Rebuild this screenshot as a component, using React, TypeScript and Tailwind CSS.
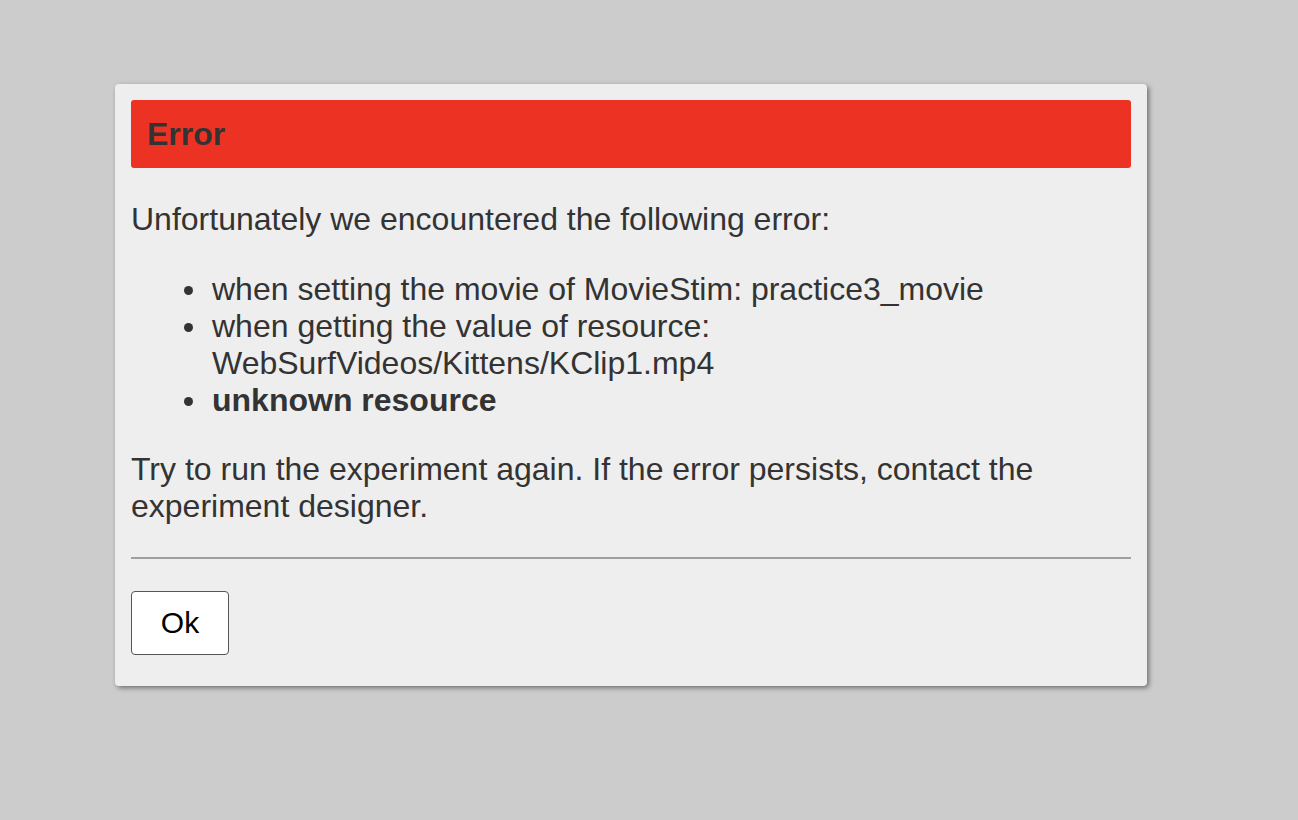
import React from "react";

const items: { text: string; bold?: boolean }[] = [
  { text: "when setting the movie of MovieStim: practice3_movie" },
  { text: "when getting the value of resource: WebSurfVideos/Kittens/KClip1.mp4" },
  { text: "unknown resource", bold: true },
];

export default function App() {
  return (
    <div className="min-h-[820px] bg-[#cccccc] pt-[84px] pl-[115px] font-['Liberation_Sans',Arial,sans-serif]">
      <div className="w-[1032px] bg-[#eeeeee] rounded-[4px] px-4 pt-4 pb-[31px] shadow-[2px_2px_5px_rgba(0,0,0,0.45)]">
        <div className="h-[68px] bg-[#ec3323] rounded-[3px] flex items-center pl-[16px] text-[32px] font-bold text-[#333333] leading-[36.7px]">
          Error
        </div>
        <p className="mt-[33px] text-[32px] leading-[36.7px] text-[#333333]">
          Unfortunately we encountered the following error:
        </p>
        <ul className="mt-[33px] pl-[53px] text-[32px] leading-[37px] text-[#333333]">
          {items.map((it, i) => (
            <li key={i} className="flex items-start">
              <span className="w-[28px] shrink-0">
                <span className="block mt-[15.5px] w-[9px] h-[9px] rounded-full bg-[#333333]" />
              </span>
              <span className={it.bold ? "font-bold" : ""}>{it.text}</span>
            </li>
          ))}
        </ul>
        <p className="mt-[32px] text-[32px] leading-[37px] text-[#333333]">
          Try to run the experiment again. If the error persists, contact the experiment designer.
        </p>
        <div className="mt-[32px] h-[2px] bg-[#a0a0a0]" />
        <button className="mt-[32px] block w-[98px] h-[64px] border border-[#555555] rounded-[4px] bg-white text-[30px] text-black leading-none">
          Ok
        </button>
      </div>
    </div>
  );
}
